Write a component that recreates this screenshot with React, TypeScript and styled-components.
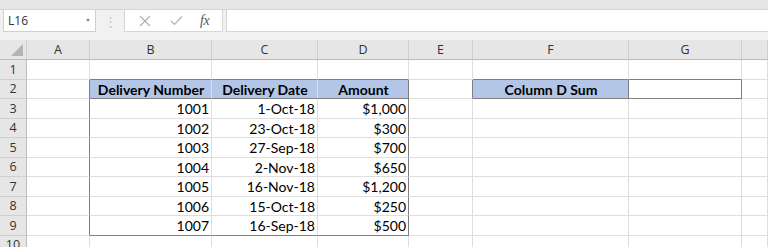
import React from "react";
import styled, { createGlobalStyle } from "styled-components";

const GlobalStyle = createGlobalStyle`
  html, body {
    margin: 0;
    padding: 0;
    background: #ffffff;
    overflow: hidden;
  }
  body {
    font-family: "Lato", "Liberation Sans", sans-serif;
  }
`;

const DARK = "#7f7f7f";
const GRID = "#dedede";
const BLUE = "#b4c6e7";

const Window = styled.div`
  width: 768px;
  height: 247px;
  overflow: hidden;
  background: #ffffff;
`;

const TopStrip = styled.div`
  height: 10px;
  background: #e6e6e6;
  border-bottom: 1px solid #d4d4d4;
  box-sizing: border-box;
`;

const FormulaBar = styled.div`
  height: 30px;
  background: #f1f1f1;
  display: flex;
  align-items: flex-start;
  padding-left: 3px;
  box-sizing: border-box;
`;

const NameBox = styled.div`
  width: 93px;
  height: 22px;
  background: #ffffff;
  border: 1px solid #d0d0d0;
  border-top: none;
  box-sizing: border-box;
  display: flex;
  align-items: center;
  justify-content: space-between;
  padding: 0 5px 0 4px;
  font-family: "Open Sans", "Liberation Sans", sans-serif;
  font-size: 12px;
  color: #333;
`;

const Caret = styled.span`
  width: 0;
  height: 0;
  border-left: 2.5px solid transparent;
  border-right: 2.5px solid transparent;
  border-top: 3px solid #888;
`;

const Grip = styled.div`
  width: 28px;
  height: 22px;
  display: flex;
  justify-content: center;
  align-items: center;
  color: #c4c4c4;
  font-size: 13px;
`;

const FxBox = styled.div`
  width: 99px;
  height: 22px;
  background: #ffffff;
  border: 1px solid #d6d6d6;
  border-top: none;
  box-sizing: border-box;
  display: flex;
  align-items: center;
  padding-left: 14px;
  gap: 19px;
`;

const FxText = styled.span`
  font-family: "Liberation Serif", "DejaVu Serif", serif;
  font-style: italic;
  font-size: 14px;
  color: #555;
  margin-left: -2px;
  letter-spacing: -0.5px;
`;

const FormulaInput = styled.div`
  flex: 1;
  height: 22px;
  margin-left: 3px;
  background: #ffffff;
  border: 1px solid #d6d6d6;
  border-top: none;
  border-right: none;
  box-sizing: border-box;
`;

const Sheet = styled.div`
  display: grid;
  grid-template-columns: 27px 63px 122px 106px 91px 64px 156px 113px 26px;
  grid-auto-rows: 19.5px;
  grid-template-rows: 20px;
`;

const ColHead = styled.div`
  background: #e6e6e6;
  border-right: 1px solid #d0d0d0;
  border-bottom: 1px solid #bcbcbc;
  box-sizing: border-box;
  display: flex;
  align-items: center;
  justify-content: center;
  font-family: "Open Sans", "Liberation Sans", sans-serif;
  font-size: 12.5px;
  color: #333;
`;

const Corner = styled(ColHead)`
  position: relative;
  &::after {
    content: "";
    position: absolute;
    right: 3px;
    bottom: 3px;
    width: 0;
    height: 0;
    border-left: 12px solid transparent;
    border-bottom: 12px solid #b4b4b4;
  }
`;

const RowHead = styled.div`
  background: #e6e6e6;
  border-right: 1px solid #bcbcbc;
  border-bottom: 1px solid #d0d0d0;
  box-sizing: border-box;
  display: flex;
  align-items: center;
  justify-content: center;
  font-family: "Open Sans", "Liberation Sans", sans-serif;
  font-size: 12.5px;
  color: #333;
`;

const Cell = styled.div<{
  $fill?: string;
  $bold?: boolean;
  $align?: "left" | "center" | "right";
  $rightDark?: boolean;
  $bottomDark?: boolean;
}>`
  background: ${(p) => p.$fill || "#ffffff"};
  border-right: 1px solid ${(p) => (p.$rightDark ? DARK : GRID)};
  border-bottom: 1px solid ${(p) => (p.$bottomDark ? DARK : GRID)};
  box-sizing: border-box;
  display: flex;
  align-items: center;
  justify-content: ${(p) =>
    p.$align === "right" ? "flex-end" : p.$align === "center" ? "center" : "flex-start"};
  padding: 1px 2px 0 3px;
  font-size: 14px;
  font-weight: ${(p) => (p.$bold ? 700 : 400)};
  color: #000;
  white-space: nowrap;
  overflow: visible;
`;

const cols = ["A", "B", "C", "D", "E", "F", "G", ""];

const data: [string, string, string][] = [
  ["1001", "1-Oct-18", "$1,000"],
  ["1002", "23-Oct-18", "$300"],
  ["1003", "27-Sep-18", "$700"],
  ["1004", "2-Nov-18", "$650"],
  ["1005", "16-Nov-18", "$1,200"],
  ["1006", "15-Oct-18", "$250"],
  ["1007", "16-Sep-18", "$500"],
];

type CellInfo = {
  text?: string;
  fill?: string;
  bold?: boolean;
  align?: "left" | "center" | "right";
};

function cellAt(row: number, col: number): CellInfo {
  if (row === 2) {
    if (col === 1) return { text: "Delivery Number", fill: BLUE, bold: true, align: "center" };
    if (col === 2) return { text: "Delivery Date", fill: BLUE, bold: true, align: "center" };
    if (col === 3) return { text: "Amount", fill: BLUE, bold: true, align: "center" };
    if (col === 5) return { text: "Column D Sum", fill: BLUE, bold: true, align: "center" };
  }
  if (row >= 3 && row <= 9 && col >= 1 && col <= 3) {
    return { text: data[row - 3][col - 1], align: "right" };
  }
  return {};
}

// dark edges for the two bordered blocks: B2:D9 and F2:G2
function rightDark(row: number, col: number) {
  if (row >= 2 && row <= 9 && (col === 0 || col === 3)) return true;
  if (row === 2 && (col === 4 || col === 5 || col === 6)) return true;
  return false;
}

function bottomDark(row: number, col: number) {
  if ((row === 1 || row === 2 || row === 9) && col >= 1 && col <= 3) return true;
  if ((row === 1 || row === 2) && (col === 5 || col === 6)) return true;
  return false;
}

export default function App() {
  const rows = Array.from({ length: 10 }, (_, i) => i + 1);
  return (
    <Window>
      <GlobalStyle />
      <TopStrip />
      <FormulaBar>
        <NameBox>
          <span>L16</span>
          <Caret />
        </NameBox>
        <Grip>⋮</Grip>
        <FxBox>
          <svg width="12" height="12" viewBox="0 0 12 12">
            <path d="M1 1 L11 11 M11 1 L1 11" stroke="#b0b0b0" strokeWidth="1.2" fill="none" />
          </svg>
          <svg width="13" height="11" viewBox="0 0 13 11">
            <path d="M1 6 L4.5 9.5 L12 1.5" stroke="#b0b0b0" strokeWidth="1.2" fill="none" />
          </svg>
          <FxText>fx</FxText>
        </FxBox>
        <FormulaInput />
      </FormulaBar>
      <Sheet>
        <Corner />
        {cols.map((c, i) => (
          <ColHead key={i}>{c}</ColHead>
        ))}
        {rows.map((r) => (
          <React.Fragment key={r}>
            <RowHead>{r}</RowHead>
            {cols.map((_, ci) => {
              const info = cellAt(r, ci);
              return (
                <Cell
                  key={ci}
                  $fill={info.fill}
                  $bold={info.bold}
                  $align={info.align}
                  $rightDark={rightDark(r, ci)}
                  $bottomDark={bottomDark(r, ci)}
                >
                  {info.text}
                </Cell>
              );
            })}
          </React.Fragment>
        ))}
      </Sheet>
    </Window>
  );
}
